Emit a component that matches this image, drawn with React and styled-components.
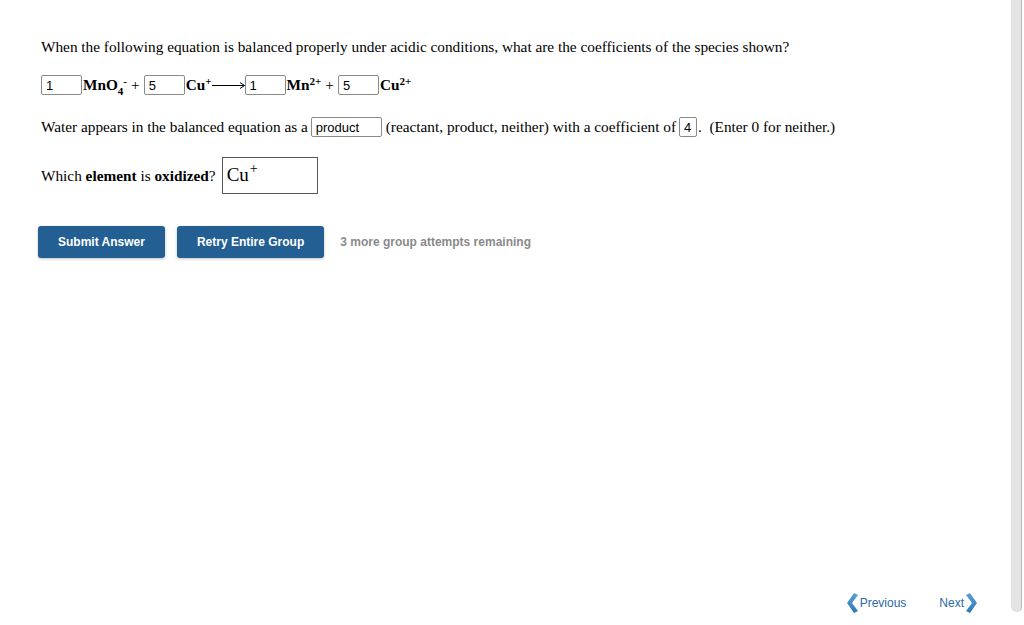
import React from 'react'
import styled, { createGlobalStyle } from 'styled-components'

const GlobalStyle = createGlobalStyle`
  html, body {
    margin: 0;
    padding: 0;
    background: #fff;
  }
`

const Page = styled.div`
  display: flex;
  height: 625px;
  overflow: hidden;
`

const Main = styled.div`
  flex: 1;
  display: flex;
  flex-direction: column;
  padding-left: 41px;
  font-family: "Liberation Serif", "Times New Roman", serif;
  font-size: 15.3px;
  color: #000;
`

const ScrollTrack = styled.div`
  width: 10px;
  margin-right: 2px;
  background: #e4e4e4;
  border-right: 1px solid #bcbcbc;
  border-bottom-left-radius: 5px;
  border-bottom-right-radius: 5px;
  height: 612px;
`

const Line = styled.div`
  display: flex;
  align-items: center;
  height: ${(p) => p.h || 20}px;
  margin-top: ${(p) => p.mt || 0}px;
  line-height: 16px;
  white-space: nowrap;
`

const Coef = styled.input`
  box-sizing: border-box;
  width: ${(p) => p.w || 41}px;
  height: 20px;
  padding: 0 4px;
  margin: 0 1px 0 ${(p) => p.ml || 0}px;
  border: 1px solid #8a8a8a;
  border-radius: 2px;
  font-family: "Liberation Sans", Arial, sans-serif;
  font-size: 13px;
  color: #000;
  background: #fff;
  outline: none;
`

const Species = styled.span`
  font-weight: bold;
  display: inline-flex;
  align-items: flex-start;
`

const Sub = styled.span`
  font-size: 11px;
  position: relative;
  top: 6px;
`

const Sup = styled.span`
  font-size: 11px;
  position: relative;
  top: -4px;
`

const Plus = styled.span`
  margin: 0 4px;
`

const Arrow = styled.svg`
  display: block;
  margin: 0;
`

const AnswerBox = styled.div`
  box-sizing: border-box;
  width: 96px;
  height: 37px;
  margin-left: 6px;
  border: 1px solid #555;
  padding: 6px 0 0 4px;
  font-size: 19px;
  line-height: 22px;
`

const BigSup = styled.span`
  font-size: 14px;
  position: relative;
  top: -8px;
  margin-left: 1px;
`

const ButtonRow = styled.div`
  display: flex;
  align-items: center;
  margin-top: 32px;
  margin-left: -3px;
  gap: 12px;
`

const Button = styled.button`
  height: 32px;
  padding: 0 ${(p) => p.px || 19}px;
  border: none;
  border-radius: 3px;
  background: #245f94;
  color: #fff;
  font-family: "Liberation Sans", Arial, sans-serif;
  font-weight: bold;
  font-size: 12px;
  box-shadow: 0 1px 3px rgba(0, 0, 0, 0.25);
  cursor: pointer;
`

const Attempts = styled.span`
  margin-left: 4px;
  font-family: "Liberation Sans", Arial, sans-serif;
  font-weight: bold;
  font-size: 12px;
  color: #8a8a8a;
`

const Nav = styled.div`
  margin-top: auto;
  margin-bottom: 12px;
  display: flex;
  justify-content: flex-end;
  align-items: center;
  gap: 33px;
  padding-right: 34px;
  height: 20px;
`

const NavLink = styled.a`
  display: flex;
  align-items: center;
  gap: 1px;
  font-family: "Liberation Sans", Arial, sans-serif;
  font-size: 12px;
  color: #2a6aa3;
  text-decoration: none;
  cursor: pointer;
`

const Chevron = ({ dir }) => (
  <svg width="12" height="20" viewBox="0 0 12 20">
    <defs>
      <linearGradient id={'cg' + dir} x1="0" y1="0" x2="0" y2="1">
        <stop offset="0" stopColor="#5b9fd6" />
        <stop offset="1" stopColor="#2f78b8" />
      </linearGradient>
    </defs>
    {dir === 'left' ? (
      <polygon points="7,0 11,2 5,10 11,18 7,20 0,10" fill={'url(#cg' + dir + ')'} />
    ) : (
      <polygon points="5,0 1,2 7,10 1,18 5,20 12,10" fill={'url(#cg' + dir + ')'} />
    )}
  </svg>
)

const App = () => {
  return (
    <Page>
      <GlobalStyle />
      <Main>
        <Line h={16} mt={39}>
          When the following equation is balanced properly under acidic conditions, what are the coefficients of the species shown?
        </Line>

        <Line mt={20}>
          <Coef defaultValue="1" />
          <Species>
            MnO<Sub>4</Sub>
            <Sup>-</Sup>
          </Species>
          <Plus>+</Plus>
          <Coef defaultValue="5" />
          <Species>
            Cu<Sup>+</Sup>
          </Species>
          <Arrow width="33" height="10" viewBox="0 0 33 10">
            <line x1="0" y1="5.5" x2="32" y2="5.5" stroke="#000" strokeWidth="1" />
            <polyline points="28,2.5 32.5,5.5 28,8.5" fill="none" stroke="#000" strokeWidth="1" />
          </Arrow>
          <Coef defaultValue="1" />
          <Species>
            Mn<Sup>2+</Sup>
          </Species>
          <Plus>+</Plus>
          <Coef defaultValue="5" />
          <Species>
            Cu<Sup>2+</Sup>
          </Species>
        </Line>

        <Line mt={22}>
          Water appears in the balanced equation as a
          <Coef w={71} ml={3} defaultValue="product" />
          <span style={{ marginLeft: 3 }}>(reactant, product, neither) with a coefficient of</span>
          <Coef w={18} ml={3} defaultValue="4" />
          .&nbsp;&nbsp;(Enter 0 for neither.)
        </Line>

        <Line h={37} mt={20}>
          Which&nbsp;<b>element</b>&nbsp;is&nbsp;<b>oxidized</b>?
          <AnswerBox>
            Cu<BigSup>+</BigSup>
          </AnswerBox>
        </Line>

        <ButtonRow>
          <Button px={20}>Submit Answer</Button>
          <Button px={20}>Retry Entire Group</Button>
          <Attempts>3 more group attempts remaining</Attempts>
        </ButtonRow>

        <Nav>
          <NavLink>
            <Chevron dir="left" />
            Previous
          </NavLink>
          <NavLink>
            Next
            <Chevron dir="right" />
          </NavLink>
        </Nav>
      </Main>
      <ScrollTrack />
    </Page>
  )
}

export default App
